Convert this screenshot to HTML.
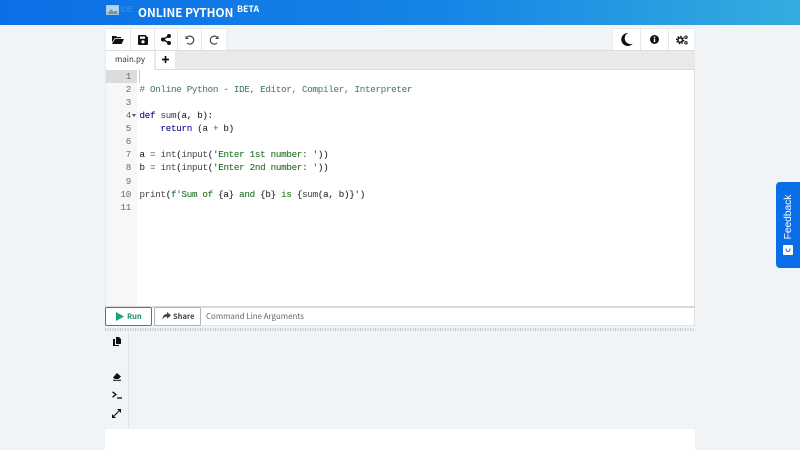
<!DOCTYPE html>
<html><head><meta charset="utf-8"><style>
*{box-sizing:border-box}
html,body{margin:0;padding:0;width:800px;height:450px;overflow:hidden;background:#f1f4f7;font-family:"Noto Sans CJK SC","Liberation Sans",sans-serif}
.a{position:absolute}
#hdr{left:0;top:0;width:800px;height:25px;background:linear-gradient(90deg,#0b6fe6 0%,#1684e6 55%,#35acdf 100%)}
.btn{position:absolute;top:29px;height:21px;background:#fff;display:flex;align-items:center;justify-content:center;box-shadow:0 0 0 .5px #e4e6e8}
.btn svg{display:block}
.ln{position:absolute;left:106px;width:25px;text-align:right;font:9.2px/13.1px "Liberation Mono",monospace;letter-spacing:-.27px;color:#6a6a6a;margin-top:-.5px}
.code{position:absolute;left:139.5px;font:9.2px/13.1px "Liberation Mono",monospace;letter-spacing:-.27px;color:#222;white-space:pre;margin-top:-.5px;-webkit-text-stroke:.06px currentColor}
.k{color:#00008b}.f{color:#4a4a4a}.s{color:#1a6b1a}.c{color:#4a7a6e}.o{color:#666}
</style></head><body>
<div class="a" id="hdr"></div>
<svg class="a" style="left:106px;top:5px" width="13" height="10" viewBox="0 0 13 10"><rect x=".5" y=".5" width="12" height="9" fill="#b9d4f3" stroke="#a9c6e8"/><path d="M1 9 5 4l3 3 2-2 2 4z" fill="#6f9f8a"/></svg>
<div class="a" style="left:120px;top:5px;font:8px 'Liberation Sans',sans-serif;color:#3f8fe8">IDE</div>
<div class="a" style="left:138px;top:4px;font-size:11.7px;line-height:18px;font-weight:700;color:#fff;letter-spacing:.02px">ONLINE PYTHON</div>
<div class="a" style="left:237px;top:2px;font-size:8.8px;line-height:13px;font-weight:700;color:#fff">BETA</div>

<div class="btn" style="left:106px;width:24px"><svg width="12" height="10" viewBox="0 0 12 10"><path d="M0 1h4l1 1h4v1.200H2.600L0 7.500z M3 4h9L9.600 9H0z" fill="#111"/></svg></div>
<div class="btn" style="left:131px;width:23px"><svg width="10" height="10" viewBox="0 0 10 10"><path fill-rule="evenodd" d="M1 0h6.500L10 2.500V9a1 1 0 0 1-1 1H1a1 1 0 0 1-1-1V1a1 1 0 0 1 1-1zM2 1.500v2.200h5V1.500zM5 5.200a1.600 1.600 0 1 0 0 3.200 1.600 1.600 0 0 0 0-3.200z" fill="#111"/></svg></div>
<div class="btn" style="left:155px;width:22px"><svg width="10" height="11" viewBox="0 0 10 11"><path d="M7.800 2 2 5.500l5.800 3.500" stroke="#111" stroke-width="1.400" fill="none"/><circle cx="8" cy="2" r="2" fill="#111"/><circle cx="2" cy="5.500" r="2" fill="#111"/><circle cx="8" cy="9" r="2" fill="#111"/></svg></div>
<div class="btn" style="left:178px;width:23px"><svg width="10" height="10" viewBox="0 0 10 10"><path d="M2.200 2A4 4 0 1 1 2 8" stroke="#444" stroke-width="1.200" fill="none"/><path d="M0.500 0.600V4h3.400z" fill="#444"/></svg></div>
<div class="btn" style="left:202px;width:24px"><svg width="10" height="10" viewBox="0 0 10 10"><path d="M7.800 2A4 4 0 1 0 8 8" stroke="#444" stroke-width="1.200" fill="none"/><path d="M9.500 0.600V4H6.100z" fill="#444"/></svg></div>

<div class="btn" style="left:613px;width:27px"><svg width="12" height="13" viewBox="0 0 12 13"><path d="M7.200 0A6.500 6.500 0 1 0 11.800 10.600 5.400 5.400 0 0 1 7.200 0z" fill="#111"/></svg></div>
<div class="btn" style="left:641px;width:27px"><svg width="9" height="9" viewBox="0 0 9 9"><circle cx="4.500" cy="4.500" r="4.500" fill="#111"/><rect x="3.800" y="1.600" width="1.400" height="1.300" fill="#fff"/><rect x="3.800" y="3.600" width="1.400" height="3.600" fill="#fff"/></svg></div>
<div class="btn" style="left:669px;width:25px"><svg width="12" height="10" viewBox="0 0 12 10"><circle cx="4.200" cy="5" r="2.300" fill="none" stroke="#111" stroke-width="1.500"/><circle cx="4.200" cy="5" r="3.600" fill="none" stroke="#111" stroke-width="1.300" stroke-dasharray="1.500 1.300"/><circle cx="10" cy="2.200" r="1.200" fill="none" stroke="#111" stroke-width="1"/><circle cx="10" cy="7.800" r="1.200" fill="none" stroke="#111" stroke-width="1"/></svg></div>

<div class="a" style="left:105px;top:50px;width:590px;height:20px;background:#e9e9e9;border-top:1px solid #dedede;border-bottom:1px solid #ddd"></div>
<div class="a" style="left:106px;top:51px;width:48px;height:19px;background:#fff;font-size:7.900px;line-height:17px;text-align:center;color:#333">main.py</div>
<div class="a" style="left:156px;top:51px;width:19px;height:18px;background:#fff"></div>
<svg class="a" style="left:162px;top:56px" width="7" height="7" viewBox="0 0 7 7"><path d="M3.500 0v7M0 3.500h7" stroke="#111" stroke-width="1.700"/></svg>

<div class="a" style="left:105px;top:70px;width:590px;height:237px;background:#fff;border-right:1px solid #e3e3e3"></div>
<div class="a" style="left:105px;top:70px;width:1px;height:237px;background:#e6e8ea"></div>
<div class="a" style="left:106px;top:70px;width:31px;height:237px;background:#f7f7f7"></div>
<div class="a" style="left:106px;top:70px;width:31px;height:12.500px;background:#dcdcdc"></div>
<div class="a" style="left:139px;top:70px;width:1px;height:13px;background:#c8c8c8"></div>

<div class="ln" style="top:70px">1</div>
<div class="ln" style="top:83px">2</div>
<div class="ln" style="top:96px">3</div>
<div class="ln" style="top:109px">4</div>
<div class="ln" style="top:122px">5</div>
<div class="ln" style="top:135.500px">6</div>
<div class="ln" style="top:148.500px">7</div>
<div class="ln" style="top:161.500px">8</div>
<div class="ln" style="top:175px">9</div>
<div class="ln" style="top:188px">10</div>
<div class="ln" style="top:201px">11</div>
<svg class="a" style="left:132px;top:114px" width="4" height="3" viewBox="0 0 4 3"><path d="M0 0h4L2 3z" fill="#555"/></svg>

<div class="code c" style="top:83px"># Online Python - IDE, Editor, Compiler, Interpreter</div>
<div class="code" style="top:109px"><span class="k">def</span> <span class="f">sum</span>(a, b):</div>
<div class="code" style="top:122px">    <span class="k">return</span> (a <span class="o">+</span> b)</div>
<div class="code" style="top:148.500px">a <span class="o">=</span> <span class="f">int</span>(<span class="f">input</span>(<span class="s">'Enter 1st number: '</span>))</div>
<div class="code" style="top:161.500px">b <span class="o">=</span> <span class="f">int</span>(<span class="f">input</span>(<span class="s">'Enter 2nd number: '</span>))</div>
<div class="code" style="top:188px"><span class="f">print</span>(<span class="s">f'Sum of </span>{a}<span class="s"> and </span>{b}<span class="s"> is </span>{<span class="f">sum</span>(a, b)}<span class="s">'</span>)</div>

<div class="a" style="left:105px;top:306px;width:590px;height:1.500px;background:#d8d8d8"></div>
<div class="a" style="left:105px;top:307.500px;width:590px;height:18.500px;background:#fff;border-right:1px solid #e3e3e3;border-bottom:1px solid #e3e3e3"></div>
<div class="a" style="left:105px;top:307px;width:47px;height:19px;background:#fff;border:1px solid #2f8f72;border-radius:2px"></div>
<svg class="a" style="left:116px;top:312px" width="8" height="9" viewBox="0 0 8 9"><path d="M0 0 8 4.500 0 9z" fill="#17a673"/></svg>
<div class="a" style="left:127px;top:309px;font-size:7.500px;line-height:15px;font-weight:700;color:#1c8a68">Run</div>
<div class="a" style="left:154px;top:307px;width:47px;height:19px;background:#fff;border:1px solid #b4b4b4;border-radius:2px"></div>
<svg class="a" style="left:162px;top:312px" width="9" height="8" viewBox="0 0 9 8"><path d="M5 0 9 3.400 5 6.800V4.800C3 4.800 1.500 5.300.5 7.500.5 4 2 2.200 5 2z" fill="#444"/></svg>
<div class="a" style="left:173px;top:309px;font-size:7.500px;line-height:15px;font-weight:700;color:#444">Share</div>
<div class="a" style="left:206px;top:308px;font-size:7.900px;line-height:17px;color:#666">Command Line Arguments</div>

<div class="a" style="left:105px;top:328px;width:590px;height:3px;background:repeating-linear-gradient(90deg,#c6cacc 0,#c6cacc 1px,#eef0f2 1px,#eef0f2 2.500px)"></div>

<div class="a" style="left:128px;top:332px;width:1px;height:97px;background:#dfe2e6"></div>
<svg class="a" style="left:113px;top:337px" width="8" height="9" viewBox="0 0 8 9"><path d="M3 0h3l2 2v5H3z M0 2h2v6h4v1H0z" fill="#111"/></svg>
<svg class="a" style="left:112px;top:373px" width="10" height="8" viewBox="0 0 10 8"><path d="M5 0 9 3.500 6.500 6H2.500L1 4.500z" fill="#111"/><path d="M1 7.300h8" stroke="#111"/></svg>
<svg class="a" style="left:112px;top:391px" width="10" height="8" viewBox="0 0 10 8"><path d="M.5.800 4 3.500.5 6.200" stroke="#111" stroke-width="1.300" fill="none"/><path d="M5 7h5" stroke="#111" stroke-width="1.300"/></svg>
<svg class="a" style="left:112px;top:408.500px" width="9" height="9" viewBox="0 0 10 10"><path d="M2.500 7.500 7.500 2.500" stroke="#111" stroke-width="1.300"/><path d="M5.500 0H10V4.500zM0 5.500V10H4.500z" fill="#111"/></svg>

<div class="a" style="left:105px;top:429px;width:590px;height:21px;background:#fff"></div>

<div class="a" style="left:776px;top:182px;width:24px;height:86px;background:#0a6ee8;border-radius:4px 0 0 4px"></div>
<div class="a" style="left:746px;top:209px;width:86px;height:16px;transform:rotate(-90deg);font:10.200px/16px 'Liberation Sans',sans-serif;color:#fff;text-align:center">Feedback</div>
<svg class="a" style="left:783px;top:245px" width="10" height="10" viewBox="0 0 10 10"><rect width="10" height="10" rx="1" fill="#fff"/><path d="M3 3.500c0 4 4 4 4 0" stroke="#0a6ee8" fill="none"/></svg>
</body></html>
